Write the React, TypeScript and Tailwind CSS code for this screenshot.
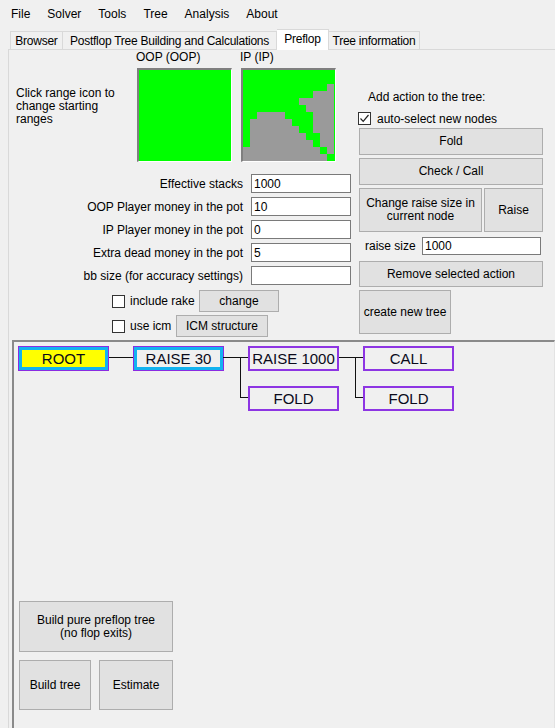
import React from "react"

const ipRange = [
  "GGGGGGGGGGGGG",
  "GGGGGGGGGGGGG",
  "GGGGGGGGGGGGX",
  "GGGGGGGGGGXXX",
  "GGGGGGGGXXXXX",
  "GGGGGGGGGXXXX",
  "GGXXXXGGGGXXX",
  "GXXXXXXGGGXXX",
  "GXXXXXXXGGXXX",
  "GXXXXXXXXGGXX",
  "GXXXXXXXXXGXX",
  "XXXXXXXXXXXGX",
  "XXXXXXXXXXXXG",
]

const menuItems = ["File", "Solver", "Tools", "Tree", "Analysis", "About"]

function Btn({ className, children }: { className: string; children: React.ReactNode }) {
  return (
    <div
      className={`flex items-center justify-center text-center leading-[13px] bg-[#e1e1e1] border border-[#adadad] text-[#000] ${className}`}
    >
      {children}
    </div>
  )
}

function Field({ value, className }: { value: string; className: string }) {
  return (
    <input
      readOnly
      value={value}
      className={`bg-white border border-[#7a7a7a] px-[2px] text-[12px] leading-[14px] outline-none text-black ${className}`}
    />
  )
}

function CheckBox({ checked }: { checked?: boolean }) {
  return (
    <div className="w-[13px] h-[13px] border border-[#333] bg-white flex items-center justify-center shrink-0">
      {checked && (
        <svg width="11" height="11" viewBox="0 0 11 11">
          <path d="M1.5 5.5 L4.2 8.3 L9.5 2" stroke="#222" strokeWidth="1.2" fill="none" />
        </svg>
      )}
    </div>
  )
}

function RangeBox({ grid }: { grid?: string[] }) {
  return (
    <div className="w-[95px] h-[94px] border-t-2 border-l-2 border-[#7f7f7f] border-b border-r border-b-white border-r-white bg-[#00ff00]">
      {grid && (
        <div className="grid grid-cols-[repeat(13,7px)] grid-rows-[repeat(13,7px)]">
          {grid.flatMap((row, r) =>
            row.split("").map((c, i) => (
              <div key={`${r}-${i}`} className={c === "G" ? "bg-[#00ff00]" : "bg-[#9a9a9a]"} />
            ))
          )}
        </div>
      )}
    </div>
  )
}

function Node({
  label,
  left,
  top,
  root,
  selected,
}: {
  label: string
  left: number
  top: number
  root?: boolean
  selected?: boolean
}) {
  return (
    <div
      className={`absolute w-[91px] h-[25px] ${selected ? "border border-[#8a2be2]" : "border-2 border-[#8d35e3]"}`}
      style={{ left, top }}
    >
      <div
        className={`w-full h-full flex items-center justify-center pb-px text-[15px] leading-none text-[#0a0a1a] ${
          selected ? "border-[3px] border-[#13b3f0]" : ""
        } ${root ? "bg-[#ffff00]" : "bg-[#f0f0f0]"}`}
      >
        {label}
      </div>
    </div>
  )
}

function Line({ left, top, w, h }: { left: number; top: number; w: number; h: number }) {
  return <div className="absolute bg-[#111]" style={{ left, top, width: w, height: h }} />
}

export default function App() {
  const rows = [
    ["Effective stacks", "1000"],
    ["OOP Player money in the pot", "10"],
    ["IP Player money in the pot", "0"],
    ["Extra dead money in the pot", "5"],
    ["bb size (for accuracy settings)", ""],
  ]

  return (
    <div className="w-[555px] h-[728px] overflow-hidden bg-[#f0f0f0] text-[12px] text-black font-['Liberation_Sans',Arial,sans-serif] flex flex-col">
      {/* menu bar */}
      <div className="h-[28px] flex items-center pl-[11px] gap-[17px] shrink-0">
        {menuItems.map((m) => (
          <span key={m}>{m}</span>
        ))}
      </div>

      {/* tabs */}
      <div className="h-[21px] flex items-end pl-[10px] shrink-0 relative z-10 tracking-[-0.25px]">
        <div className="h-[18px] w-[53px] border border-b-0 border-[#d9d9d9] flex items-center justify-center">Browser</div>
        <div className="h-[18px] w-[214px] border border-b-0 border-l-0 border-[#d9d9d9] flex items-center justify-center whitespace-nowrap">
          Postflop Tree Building and Calculations
        </div>
        <div className="h-[21px] w-[52px] bg-white border border-b-0 border-l-0 border-[#d9d9d9] flex items-center justify-center pb-[2px] -mb-px">
          Preflop
        </div>
        <div className="h-[18px] w-[91px] border border-b-0 border-l-0 border-[#d9d9d9] flex items-center justify-center whitespace-nowrap">
          Tree information
        </div>
      </div>

      {/* tab page */}
      <div className="flex-1 ml-[8px] border-l border-t border-[#d9d9d9] flex flex-col min-h-0">
        <div className="h-[290px] flex shrink-0">
          {/* left column */}
          <div className="w-[347px] flex flex-col">
            <div className="h-[115px] flex">
              <div className="w-[127px] pl-[7px] pt-[37px] leading-[13px]">
                <div>Click range icon to</div>
                <div>change starting</div>
                <div>ranges</div>
              </div>
              <div className="w-[104px] flex flex-col">
                <div className="leading-[14px] h-[14px]">OOP (OOP)</div>
                <div className="mt-[4px] ml-[1px]">
                  <RangeBox />
                </div>
              </div>
              <div className="flex flex-col">
                <div className="leading-[14px] h-[14px]">IP (IP)</div>
                <div className="mt-[4px] ml-[1px]">
                  <RangeBox grid={ipRange} />
                </div>
              </div>
            </div>

            <div className="mt-[9px] flex flex-col gap-[4px]">
              {rows.map(([label, value]) => (
                <div key={label} className="flex items-center h-[19px]">
                  <div className="w-[235px] text-right pr-px">{label}</div>
                  <Field value={value} className="ml-[7px] w-[100px] h-[19px]" />
                </div>
              ))}
            </div>

            <div className="mt-[5px] flex items-center ml-[103px] h-[22px]">
              <CheckBox />
              <span className="ml-[5px] w-[69px]">include rake</span>
              <Btn className="w-[80px] h-[22px]">change</Btn>
            </div>
            <div className="mt-[3px] flex items-center ml-[103px] h-[22px]">
              <CheckBox />
              <span className="ml-[5px] w-[46px]">use icm</span>
              <Btn className="w-[92px] h-[22px]">ICM structure</Btn>
            </div>
          </div>

          {/* right column */}
          <div className="flex-1 flex flex-col">
            <div className="pl-[12px] mt-[41px] leading-[13px]">Add action to the tree:</div>
            <div className="mt-[8px] ml-[2px] flex items-center h-[13px]">
              <CheckBox checked />
              <span className="ml-[6px]">auto-select new nodes</span>
            </div>
            <div className="ml-[3px] flex flex-col">
              <Btn className="mt-[3px] w-[184px] h-[27px]">Fold</Btn>
              <Btn className="mt-[3px] w-[184px] h-[27px]">Check / Call</Btn>
              <div className="mt-[3px] flex gap-[2px]">
                <Btn className="w-[123px] h-[44px]">
                  Change raise size in
                  <br />
                  current node
                </Btn>
                <Btn className="w-[59px] h-[44px]">Raise</Btn>
              </div>
              <div className="mt-[5px] flex items-center h-[18px]">
                <span className="ml-[6px] w-[57px]">raise size</span>
                <Field value="1000" className="w-[119px] h-[18px]" />
              </div>
              <Btn className="mt-[6px] w-[184px] h-[26px]">Remove selected action</Btn>
              <Btn className="mt-[3px] w-[92px] h-[44px]">create new tree</Btn>
            </div>
          </div>
        </div>

        {/* tree canvas */}
        <div className="flex-1 ml-[3px] border-t-2 border-l-2 border-[#8a8a8a] border-r border-r-[#e3e3e3] relative flex flex-col">
          <Node label="ROOT" left={4} top={4} root selected />
          <Line left={95} top={15} w={24} h={1} />
          <Node label="RAISE 30" left={119} top={4} selected />
          <Line left={209} top={15} w={25} h={1} />
          <Line left={226} top={15} w={1} h={41} />
          <Line left={226} top={55} w={8} h={1} />
          <Node label="RAISE 1000" left={234} top={4} />
          <Node label="FOLD" left={234} top={44} />
          <Line left={325} top={15} w={24} h={1} />
          <Line left={341} top={15} w={1} h={41} />
          <Line left={341} top={55} w={8} h={1} />
          <Node label="CALL" left={349} top={4} />
          <Node label="FOLD" left={349} top={44} />

          <div className="mt-auto mb-[18px] ml-[5px] flex flex-col gap-[8px]">
            <Btn className="w-[154px] h-[51px]">
              Build pure preflop tree
              <br />
              (no flop exits)
            </Btn>
            <div className="flex gap-[8px]">
              <Btn className="w-[72px] h-[50px]">Build tree</Btn>
              <Btn className="w-[74px] h-[50px]">Estimate</Btn>
            </div>
          </div>
        </div>
      </div>
    </div>
  )
}
